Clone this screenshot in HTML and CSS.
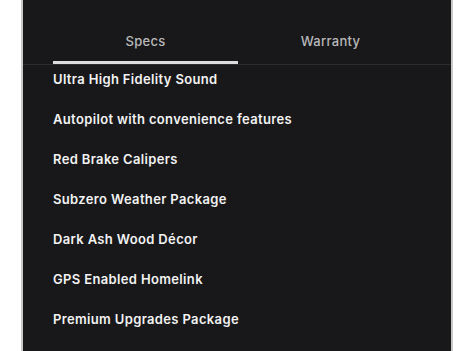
FILE: index.html
```html
<!DOCTYPE html>
<html lang="en">
<head>
<meta charset="utf-8">
<link rel="stylesheet" href="styles.css">
</head>
<body>
<div class="panel">
  <div class="tabs">
    <div class="tab active">Specs</div>
    <div class="tab">Warranty</div>
  </div>
  <div class="divider"></div>
  <ul class="specs">
    <li>Ultra High Fidelity Sound</li>
    <li>Autopilot with convenience features</li>
    <li>Red Brake Calipers</li>
    <li>Subzero Weather Package</li>
    <li>Dark Ash Wood Décor</li>
    <li>GPS Enabled Homelink</li>
    <li>Premium Upgrades Package</li>
  </ul>
</div>
</body>
</html>
```
FILE: styles.css
```css
html, body {
  margin: 0;
  padding: 0;
  background: #ffffff;
}
body {
  font-family: Inter, "Noto Sans", sans-serif;
  -webkit-font-smoothing: antialiased;
}
.panel {
  margin-left: 21px;
  width: 428px;
  height: 351px;
  background: #18181a;
  border-left: 2px solid #c8c8c8;
  border-right: 2px solid #c8c8c8;
  overflow: hidden;
}
.tabs {
  display: grid;
  grid-template-columns: 1fr 1fr;
  margin: 0 28px 0 30px;
  padding-top: 31px;
}
.tab {
  text-align: center;
  font-size: 13px;
  font-weight: 500;
  letter-spacing: 0.3px;
  line-height: 20px;
  color: #b8b8ba;
  padding-bottom: 10px;
  border-bottom: 3px solid transparent;
}
.tab.active {
  border-bottom-color: #dcdcdc;
}
.divider {
  height: 1px;
  background: #2c2c2f;
}
.specs {
  list-style: none;
  margin: 4px 0 0 30px;
  padding: 0;
  display: flex;
  flex-direction: column;
  gap: 20px;
}
.specs li {
  font-size: 13px;
  font-weight: 600;
  letter-spacing: 0.35px;
  line-height: 20px;
  color: #f2f2f2;
}
```
